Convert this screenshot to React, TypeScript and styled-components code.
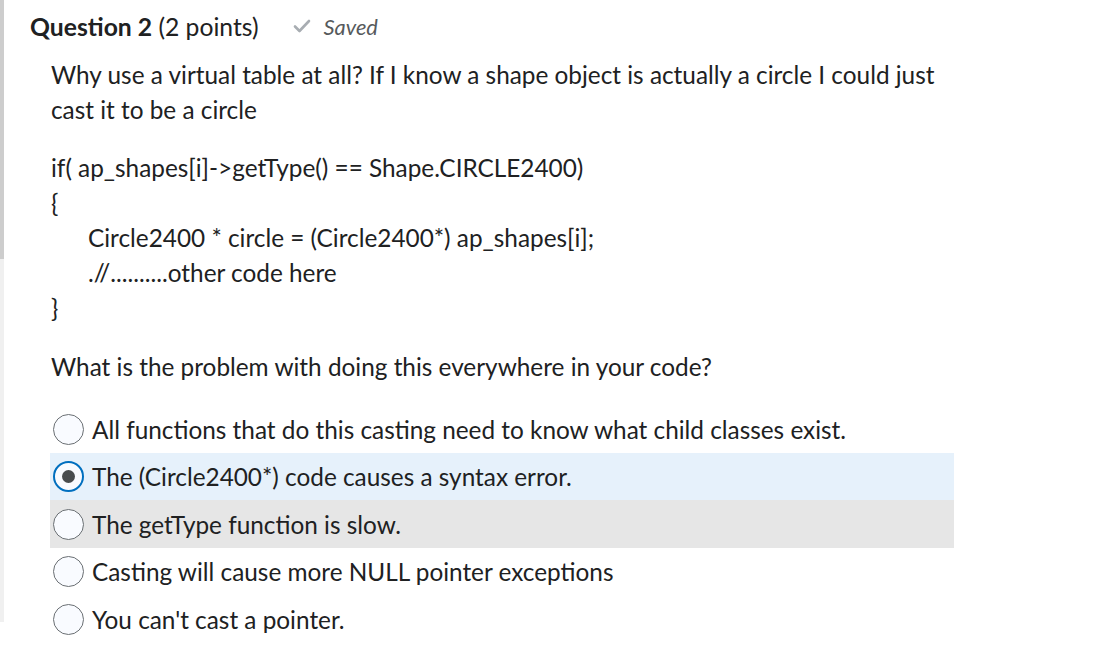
import styled, { createGlobalStyle } from "styled-components";

const GlobalStyle = createGlobalStyle`
  body {
    margin: 0;
    background: #ffffff;
    font-family: Lato, "Open Sans", sans-serif;
    color: #202122;
  }
`;

const Frame = styled.div`
  display: grid;
  grid-template-columns: 4px 1fr;
  align-items: start;
  width: 1116px;
  height: 658px;
`;

const Track = styled.div`
  height: 622px;
  background: #f0f0f0;
`;

const Thumb = styled.div`
  height: 259px;
  background: #cdcdcd;
`;

const Content = styled.main`
  padding: 9px 0 0 26px;
`;

const Header = styled.div`
  display: flex;
  align-items: center;
  height: 34px;
`;

const Title = styled.h2`
  margin: 0;
  font-size: 24.7px;
  font-weight: 400;
  b {
    font-weight: 700;
  }
`;

const Saved = styled.span`
  display: flex;
  align-items: center;
  gap: 13px;
  margin-left: 34px;
  font-size: 21.8px;
  font-style: italic;
  color: #565a5c;
`;

const Body = styled.div`
  padding: 14px 0 0 21px;
  font-size: 24.35px;
  line-height: 35px;
`;

const Para = styled.p<{ $top: number }>`
  margin: ${(p) => p.$top}px 0 0;
`;

const Line = styled.div<{ $indent?: boolean }>`
  padding-left: ${(p) => (p.$indent ? 37 : 0)}px;
  white-space: pre;
`;

const Options = styled.div`
  margin: 21px 0 0 -1px;
  width: 904px;
`;

const Option = styled.label<{ $tone?: "selected" | "hover" }>`
  display: flex;
  align-items: center;
  gap: 8px;
  height: 47.5px;
  padding: 1px 0 0 3px;
  box-sizing: border-box;
  background: ${(p) =>
    p.$tone === "selected" ? "#e6f1fb" : p.$tone === "hover" ? "#e6e6e6" : "transparent"};
`;

const Radio = styled.span<{ $checked?: boolean }>`
  box-sizing: border-box;
  flex: none;
  display: grid;
  place-items: center;
  width: 31px;
  height: 31px;
  border-radius: 50%;
  background: #f9fbff;
  border: ${(p) => (p.$checked ? "2.5px solid #006fbf" : "1.5px solid #6a6f73")};
  &::after {
    content: "";
    display: ${(p) => (p.$checked ? "block" : "none")};
    width: 13px;
    height: 13px;
    border-radius: 50%;
    background: #494c4e;
  }
`;

const options = [
  { text: "All functions that do this casting need to know what child classes exist." },
  { text: "The (Circle2400*) code causes a syntax error.", tone: "selected" as const },
  { text: "The getType function is slow.", tone: "hover" as const },
  { text: "Casting will cause more NULL pointer exceptions" },
  { text: "You can't cast a pointer." },
];

export default function App() {
  return (
    <>
      <GlobalStyle />
      <Frame>
        <Track>
          <Thumb />
        </Track>
        <Content>
          <Header>
            <Title>
              <b>Question 2</b> (2 points)
            </Title>
            <Saved>
              <svg width="18" height="14" viewBox="0 0 18 14">
                <path d="M2 7.5 L6.5 12 L16 2" fill="none" stroke="#a8adb2" strokeWidth="2.6" strokeLinecap="round" strokeLinejoin="round" />
              </svg>
              Saved
            </Saved>
          </Header>
          <Body>
            <Para $top={0}>
              Why use a virtual table at all? If I know a shape object is actually a circle I could just
              <br />
              cast it to be a circle
            </Para>
            <Para $top={23}>
              <Line>if( ap_shapes[i]-&gt;getType() == Shape.CIRCLE2400)</Line>
              <Line>{"{"}</Line>
              <Line $indent>Circle2400 * circle = (Circle2400*) ap_shapes[i];</Line>
              <Line $indent>.//..........other code here</Line>
              <Line>{"}"}</Line>
            </Para>
            <Para $top={24}>What is the problem with doing this everywhere in your code?</Para>
            <Options>
              {options.map((o) => (
                <Option key={o.text} $tone={o.tone}>
                  <Radio $checked={o.tone === "selected"} />
                  {o.text}
                </Option>
              ))}
            </Options>
          </Body>
        </Content>
      </Frame>
    </>
  );
}
